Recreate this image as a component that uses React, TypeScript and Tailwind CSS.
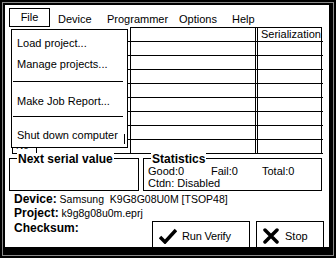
import type { ReactNode } from 'react';

const MENU = [
  { label: 'Device', w: 'w-[49px]' },
  { label: 'Programmer', w: 'w-[72px]' },
  { label: 'Options', w: 'w-[53px]' },
  { label: 'Help', w: 'w-[30px]' },
];

function GroupBox({ label, className, children }: { label: string; className: string; children?: ReactNode }) {
  return (
    <div className={`relative h-[33px] border border-black ${className}`}>
      <span className="absolute top-[-6px] left-[7px] bg-white px-[1px] text-[12px] leading-none font-bold">
        {label}
      </span>
      {children}
    </div>
  );
}

export default function App() {
  return (
    <div className="w-[336px] h-[258px] bg-black p-[2px] font-['Liberation_Sans',Arial,sans-serif] text-black">
      <div className="h-full border border-[#8a8a8a] pl-[2px] pt-[2px] pr-[4px] pb-[8px]">
        <div className="relative h-full bg-white">
          {/* menu bar */}
          <div className="flex h-[22px] items-start pl-[4px] pt-[3px] text-[11px]">
            <div className="flex h-[19px] w-[41px] items-center justify-center border border-black">File</div>
            <div className="flex pl-[8px] pt-[3px]">
              {MENU.map((m) => (
                <span key={m.label} className={m.w}>
                  {m.label}
                </span>
              ))}
            </div>
          </div>

          {/* table */}
          <div className="ml-[7px] w-[311px] border-b border-black">
            <div className="flex h-[14px]">
              <div className="w-[24px]" />
              <div className="w-[94px]" />
              <div className="w-[125px] border-l border-t border-black" />
              <div className="w-[3px] border-l border-r border-t border-black" />
              <div className="w-[64px] border-r border-t border-black text-[11px] leading-[13px] pl-[3px]">
                Serialization
              </div>
            </div>
            {Array.from({ length: 8 }).map((_, i) => (
              <div key={i} className="flex h-[14px] border-t border-black">
                <div className="relative w-[24px] border-l border-black">
                  {i === 7 && (
                    <span className="absolute left-[3px] top-[1px] text-[10px] leading-none">No</span>
                  )}
                </div>
                <div className="w-[94px] border-l border-black" />
                <div className="w-[125px] border-l border-black" />
                <div className="w-[3px] border-l border-r border-black" />
                <div className="w-[64px] border-r border-black" />
              </div>
            ))}
          </div>

          {/* group boxes */}
          <div className="mt-[4px] flex gap-[4px] pl-[4px]">
            <GroupBox label="Next serial value" className="w-[130px]" />
            <GroupBox label="Statistics" className="w-[179px]">
              <div className="pl-[4px] pt-[6px] text-[11px] leading-[12px]">
                <div className="flex">
                  <span className="w-[63px]">Good:0</span>
                  <span className="w-[51px]">Fail:0</span>
                  <span>Total:0</span>
                </div>
                <div>Ctdn: Disabled</div>
              </div>
            </GroupBox>
          </div>

          {/* info + buttons */}
          <div className="pl-[9px] pt-[1px] text-[10.5px] leading-[14px]">
            <div>
              <b className="text-[12px]">Device:</b> Samsung&nbsp; K9G8G08U0M [TSOP48]
            </div>
            <div>
              <b className="text-[12px]">Project:</b> k9g8g08u0m.eprj
            </div>
          </div>
          <div className="flex pl-[9px]">
            <div className="w-[138px] pt-[1px] text-[12px] leading-[14px] font-bold">Checksum:</div>
            <div className="mt-[1px] flex h-[29px] w-[98px] items-center gap-[5px] border-t border-l border-r border-black pl-[6px] text-[11px] tracking-[-0.2px]">
              <svg width="18" height="16" viewBox="0 0 18 16">
                <path d="M1 9 L6 14 L17 2" fill="none" stroke="black" strokeWidth="3.5" strokeLinejoin="miter" />
              </svg>
              <span>Run Verify</span>
            </div>
            <div className="ml-[6px] mt-[1px] flex h-[29px] w-[68px] items-center gap-[6px] border-t border-l border-r border-black pl-[6px] text-[11px]">
              <svg width="16" height="16" viewBox="0 0 16 16">
                <path d="M2 2 L14 14 M14 2 L2 14" fill="none" stroke="black" strokeWidth="3.5" strokeLinecap="round" />
              </svg>
              <span>Stop</span>
            </div>
          </div>

          {/* File dropdown */}
          <div className="absolute left-[6px] top-[24px] h-[119px] w-[117px] border border-black bg-white text-[11px]">
            <div className="absolute left-[5px] top-[5px]">Load project...</div>
            <div className="absolute left-[5px] top-[26px]">Manage projects...</div>
            <div className="absolute left-[1px] top-[51px] h-px w-[110px] bg-black" />
            <div className="absolute left-[5px] top-[63px]">Make Job Report...</div>
            <div className="absolute left-[1px] top-[86px] h-px w-[110px] bg-black" />
            <div className="absolute left-[5px] top-[97px]">Shut down computer</div>
            <div className="absolute left-[112px] top-[104px] h-[10px] w-px bg-black" />
          </div>
        </div>
      </div>
    </div>
  );
}
